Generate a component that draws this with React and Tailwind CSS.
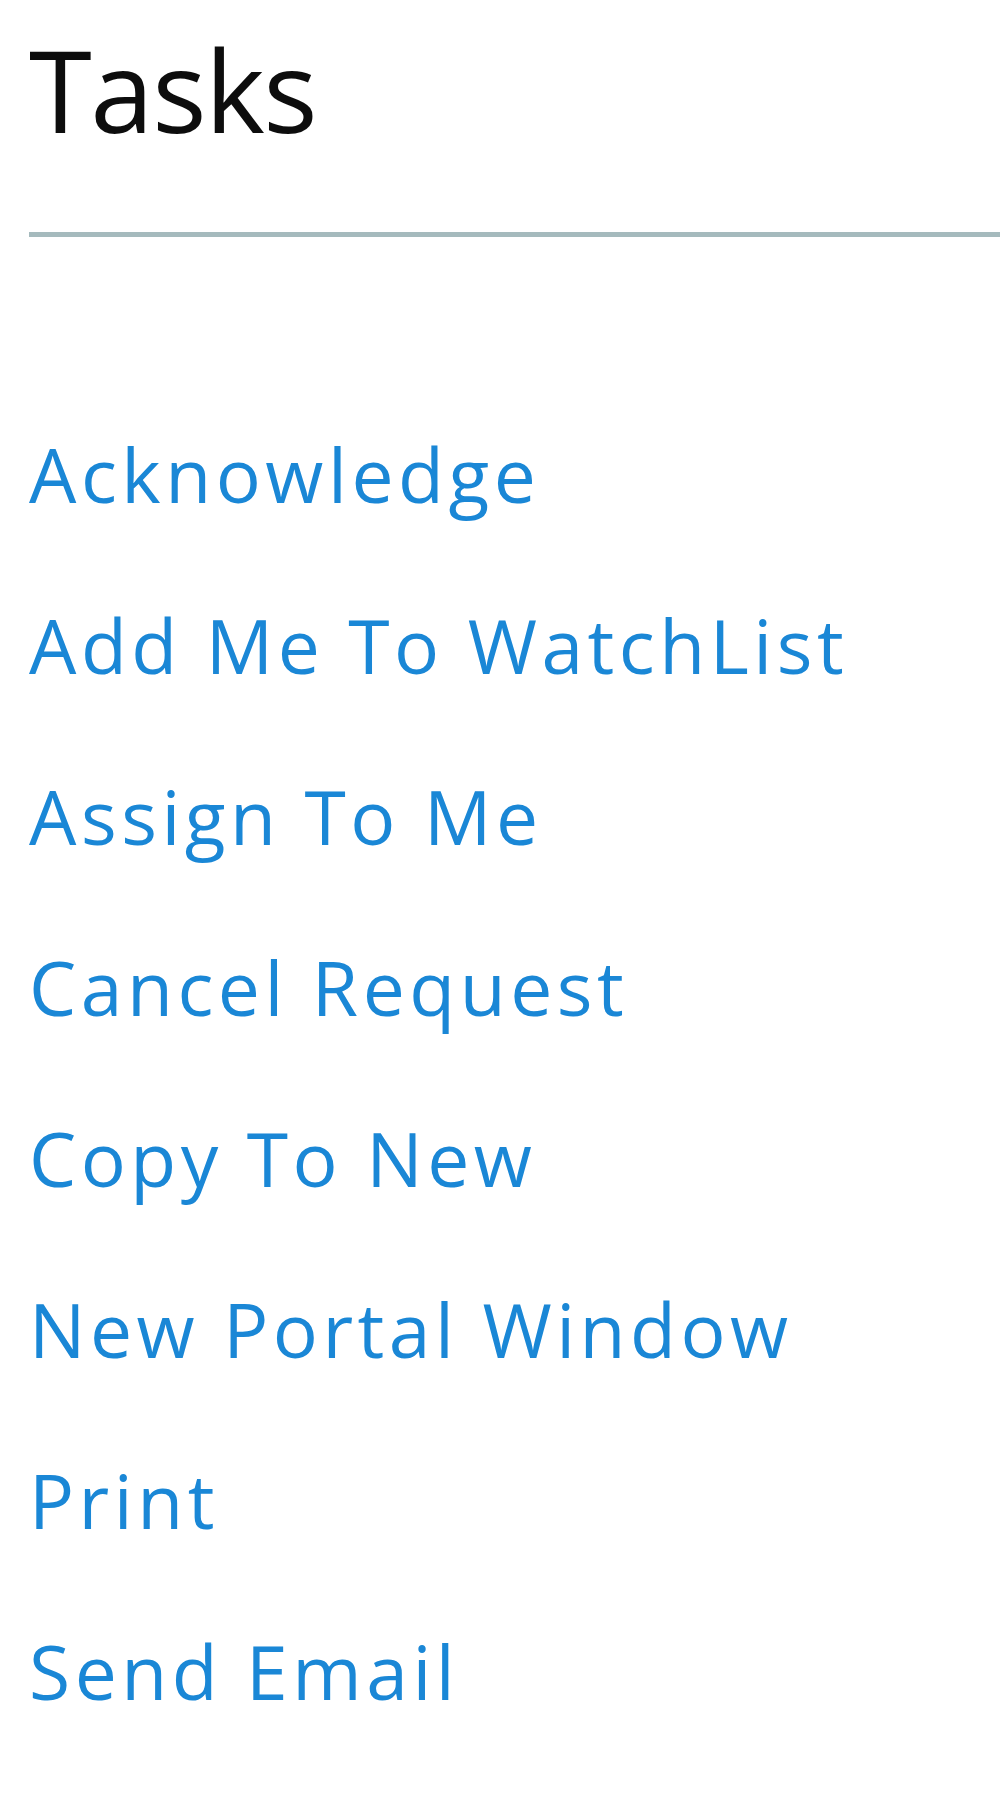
export default function App() {
  const links = [
    "Acknowledge",
    "Add Me To WatchList",
    "Assign To Me",
    "Cancel Request",
    "Copy To New",
    "New Portal Window",
    "Print",
    "Send Email",
  ];
  return (
    <div className="min-h-[1811px] w-[1000px] bg-white pl-[29px] font-['Open_Sans',sans-serif]">
      <h1 className="pt-[14px] text-[114px] leading-[150px] text-[#0d0d0d] tracking-[-1.5px]">Tasks</h1>
      <div className="mt-[68px] h-[5px] bg-[#a5babd]" />
      <ul className="mt-[152px] flex flex-col">
        {links.map((l) => (
          <li key={l} className="text-[75px] leading-[171px] text-[#1a87d6] tracking-[4.5px]">
            <a>{l}</a>
          </li>
        ))}
      </ul>
    </div>
  );
}
